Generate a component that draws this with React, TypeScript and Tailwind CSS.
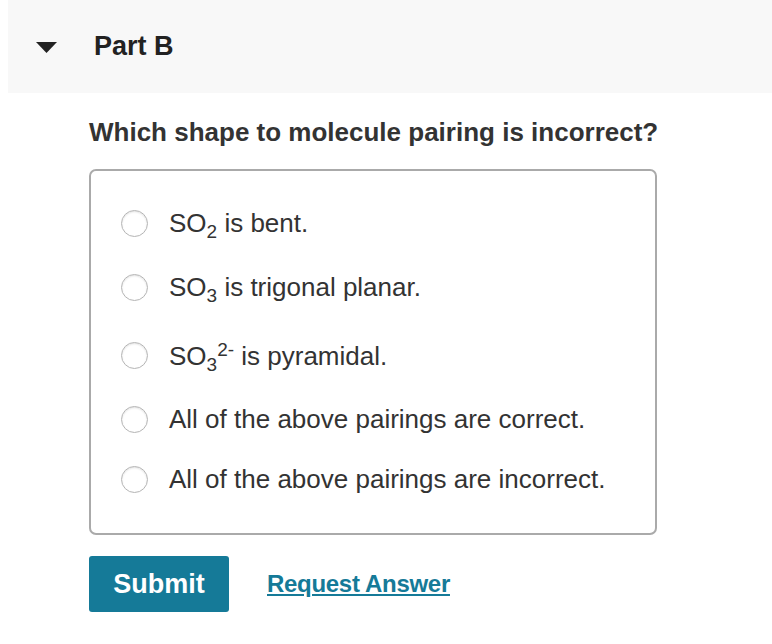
import React from "react";

const font = { fontFamily: '"Liberation Sans", Arial, Helvetica, sans-serif' };

function Radio() {
  return (
    <span className="inline-block w-[27px] h-[27px] rounded-full border border-[#b5b5b5] bg-white shadow-[inset_0_1px_2px_rgba(0,0,0,0.12)] shrink-0" />
  );
}

function Option({ children, className = "" }: { children: React.ReactNode; className?: string }) {
  return (
    <div className={"flex items-center h-[60px] " + className}>
      <Radio />
      <span className="ml-[21px] text-[26px] text-[#333] leading-none whitespace-nowrap">{children}</span>
    </div>
  );
}

function Sub({ children }: { children: React.ReactNode }) {
  return <span className="relative top-[6px] text-[19px]">{children}</span>;
}

export default function App() {
  return (
    <div className="w-[772px] h-[644px] bg-white" style={font}>
      <div className="ml-[8px] h-[93px] bg-[#f8f8f8] flex items-center">
        <svg width="21" height="11" viewBox="0 0 21 11" className="ml-[28px] mt-[2px]">
          <polygon points="0,0 21,0 10.5,11" fill="#222" />
        </svg>
        <span className="ml-[37px] text-[27px] font-bold text-[#222]">Part B</span>
      </div>
      <div className="pl-[89px] pt-[26px]">
        <div className="text-[26px] font-bold text-[#333] leading-none h-[28px] whitespace-nowrap">
          Which shape to molecule pairing is incorrect?
        </div>
        <div className="mt-[22px] w-[568px] h-[366px] border-2 border-[#aaaaaa] rounded-[7px] pl-[30px] pt-[22px]">
          <Option>
            SO<Sub>2</Sub> is bent.
          </Option>
          <Option className="mt-[4px]">
            SO<Sub>3</Sub> is trigonal planar.
          </Option>
          <Option className="mt-[8.5px]">
            SO<Sub>3</Sub>
            <span className="relative top-[-9px] text-[19px]">2-</span> is pyramidal.
          </Option>
          <Option className="mt-[3.5px]">All of the above pairings are correct.</Option>
          <Option>All of the above pairings are incorrect.</Option>
        </div>
        <div className="mt-[21px] flex items-center">
          <button className="w-[140px] h-[56px] bg-[#157a98] rounded-[3px] text-white text-[27px] font-bold">
            Submit
          </button>
          <a className="ml-[38px] text-[24px] font-bold text-[#157a98] underline tracking-[-0.3px]">
            Request Answer
          </a>
        </div>
      </div>
    </div>
  );
}
